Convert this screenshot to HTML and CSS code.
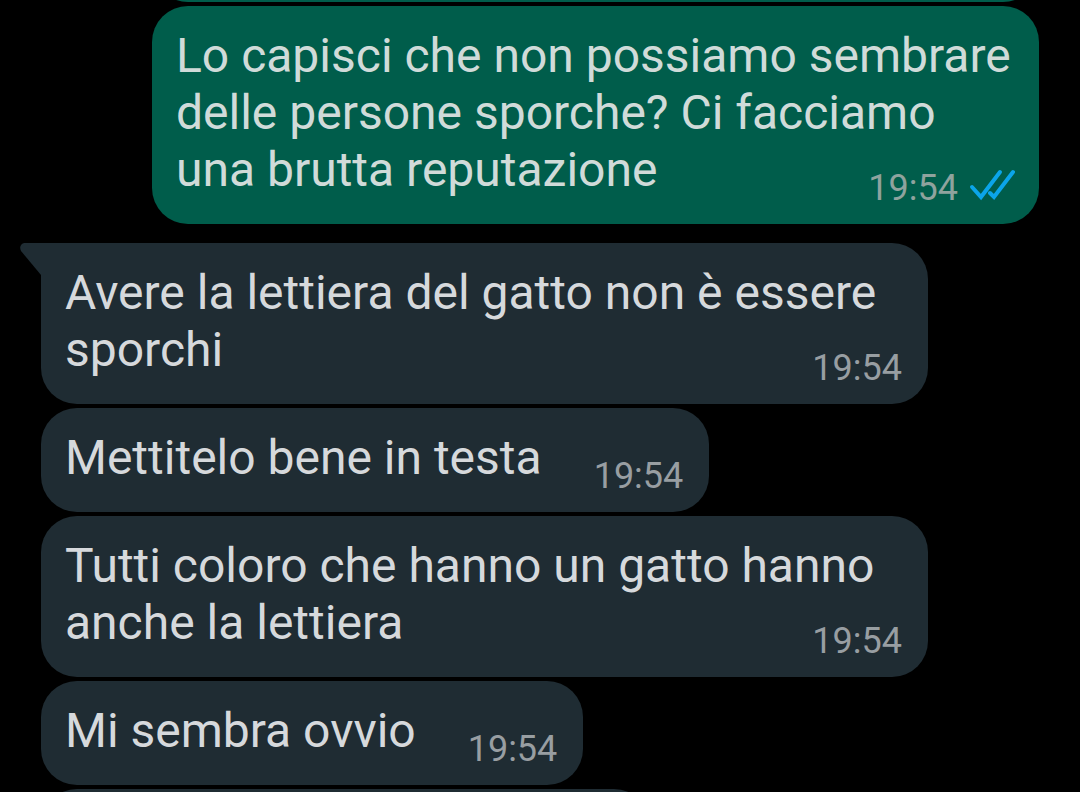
FILE: index.html
```
<!DOCTYPE html>
<html lang="it">
<head>
    <meta charset="UTF-8">
    <meta name="viewport" content="width=device-width, initial-scale=1.0">
    <title>Chat</title>
    <link rel="stylesheet" href="styles.css">
</head>
<body>

    <main class="chat">
        <div class="bubble sent previous"></div>

        <div class="bubble sent">
            <span class="text">Lo capisci che non possiamo sembrare delle persone sporche? Ci facciamo una brutta reputazione</span>
            <span class="meta">
                <time datetime="19:54">19:54</time>
                <svg class="ticks" viewBox="0 0 46 32" aria-hidden="true">
                    <path d="M3 18 L12 28 L31 3"/>
                    <path d="M21 24 L25 28 L44 3"/>
                </svg>
            </span>
        </div>

        <div class="bubble received first">
            <svg class="tail" viewBox="0 0 22 34" aria-hidden="true">
                <path d="M22 0 H5 C1 0 -1 4 1 8 L21 32 H22 Z"/>
            </svg>
            <span class="text">Avere la lettiera del gatto non è essere sporchi</span>
            <span class="meta"><time datetime="19:54">19:54</time></span>
        </div>

        <div class="bubble received">
            <span class="text">Mettitelo bene in testa</span>
            <span class="meta"><time datetime="19:54">19:54</time></span>
        </div>

        <div class="bubble received">
            <span class="text">Tutti coloro che hanno un gatto hanno anche la lettiera</span>
            <span class="meta"><time datetime="19:54">19:54</time></span>
        </div>

        <div class="bubble received">
            <span class="text">Mi sembra ovvio</span>
            <span class="meta"><time datetime="19:54">19:54</time></span>
        </div>

        <div class="bubble received next"></div>
    </main>

</body>
</html>
```
FILE: styles.css
```
* {
    box-sizing: border-box;
}

body {
    margin: 0;
    background-color: #000;
    font-family: Roboto, sans-serif;
}

.chat {
    display: flex;
    flex-direction: column;
    gap: 4px;
    height: 100vh;
    padding: 0 41px;
    overflow: hidden;
}

.bubble {
    position: relative;
    flex-shrink: 0;
    max-width: calc(100% - 111px);
    padding: 21px 24px 16px;
    border-radius: 36px;
    font-size: 48px;
    line-height: 57px;
}

.sent {
    align-self: flex-end;
    background-color: #005d4b;
    color: #d0dbd9;
}

.received {
    align-self: flex-start;
    background-color: #1f2c33;
    color: #d6d9dc;
}

.first {
    margin-top: 15px;
    border-top-left-radius: 0;
}

.tail {
    position: absolute;
    top: 0;
    left: -21px;
    width: 22px;
    height: 34px;
    fill: #1f2c33;
}

/* ora e spunte in basso a destra, sull'ultima riga */
.meta {
    float: right;
    display: flex;
    align-items: center;
    gap: 11px;
    margin: 27px 2px 0 52px;
    font-size: 36px;
    line-height: 40px;
    color: #989ea2;
}

.sent .meta {
    margin-right: 0;
    color: #8fa39e;
}

.bubble::after {
    content: "";
    display: block;
    clear: both;
}

.ticks {
    width: 46px;
    height: 32px;
    margin-bottom: 6px;
    fill: none;
    stroke: #0ba5e9;
    stroke-width: 4;
    stroke-linecap: round;
}

/* messaggi visibili solo in parte */
.previous,
.next {
    width: 89%;
    height: 104px;
}

.previous {
    margin-top: -102px;
}

.next {
    width: 61%;
}
```
